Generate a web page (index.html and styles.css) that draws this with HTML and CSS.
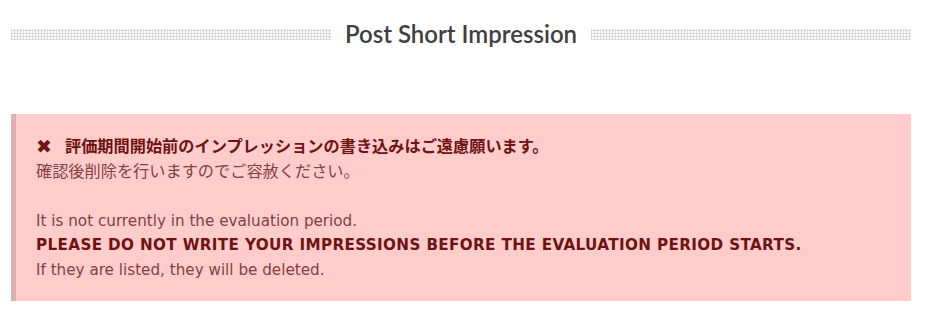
FILE: index.html
```html
<!DOCTYPE html>
<html lang="ja">
<head>
    <meta charset="UTF-8">
    <title>Post Short Impression</title>
    <link rel="stylesheet" href="styles.css">
</head>
<body>
    <div class="section">
        <div class="section-head">
            <span class="dots"></span>
            <h2 class="section-title">Post Short Impression</h2>
            <span class="dots"></span>
        </div>

        <div class="notice">
            <p class="strong ja"><span class="notice-icon">✖</span>評価期間開始前のインプレッションの書き込みはご遠慮願います。</p>
            <p class="ja">確認後削除を行いますのでご容赦ください。</p>
            <p class="blank">&nbsp;</p>
            <p>It is not currently in the evaluation period.</p>
            <p class="strong caps">PLEASE DO NOT WRITE YOUR IMPRESSIONS BEFORE THE EVALUATION PERIOD STARTS.</p>
            <p>If they are listed, they will be deleted.</p>
        </div>
    </div>
</body>
</html>
```

FILE: styles.css
```css
body {
    margin: 0;
    background: #fff;
    font-family: 'DejaVu Sans', 'Noto Sans CJK JP', sans-serif;
}
.section {
    padding: 18px 16px 0 11px;
}
.section-head {
    display: flex;
    align-items: center;
    gap: 14px;
}
.dots {
    flex: 1;
    height: 11px;
    background-image:
        repeating-linear-gradient(90deg, #d8d8d8 0 1px, transparent 1px 3px),
        repeating-linear-gradient(0deg, #d8d8d8 0 1px, transparent 1px 3px);
}
.section-title {
    margin: 0;
    font-family: Lato, 'Open Sans', sans-serif;
    font-weight: 600;
    font-size: 24px;
    color: #404040;
    line-height: 32px;
}
.notice {
    margin-top: 64px;
    background: #ffcccc;
    border-left: 5px solid #e2aeae;
    padding: 21px 20px 19px 20px;
    color: #843f3f;
    font-size: 15.2px;
    line-height: 24.5px;
}
.notice p {
    margin: 0;
}
.notice .ja {
    font-size: 16.2px;
}
.notice .strong {
    font-weight: bold;
    color: #6e1212;
}
.notice .caps {
    letter-spacing: 0.36px;
}
.notice-icon {
    display: inline-block;
    width: 29px;
    font-size: 19px;
    line-height: 1;
    vertical-align: -1px;
}
```
